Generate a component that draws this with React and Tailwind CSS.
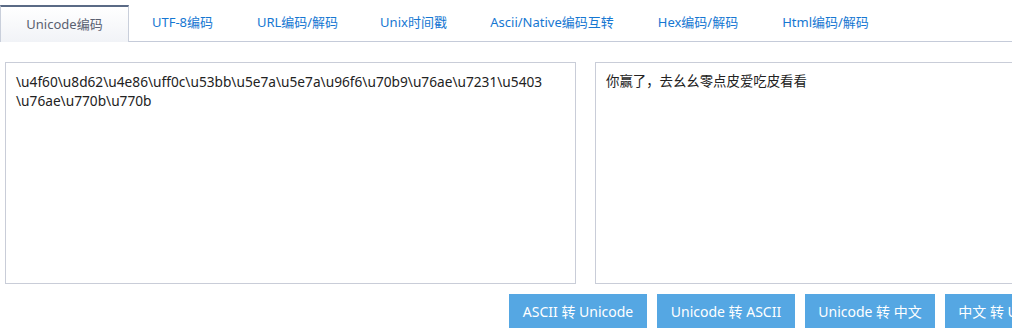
const tabs = [
  { label: "Unicode编码", w: "w-[129px]", active: true },
  { label: "UTF-8编码", w: "w-[107px]" },
  { label: "URL编码/解码", w: "w-[123px]" },
  { label: "Unix时间戳", w: "w-[109px]" },
  { label: "Ascii/Native编码互转", w: "w-[168px]" },
  { label: "Hex编码/解码", w: "w-[124px]" },
  { label: "Html编码/解码", w: "w-[131px]" },
];

const buttons = [
  { label: "ASCII 转 Unicode", w: "w-[138px]" },
  { label: "Unicode 转 ASCII", w: "w-[138px]" },
  { label: "Unicode 转 中文", w: "w-[130px]" },
  { label: "中文 转 Unicode", w: "w-[130px]" },
];

export default function App() {
  return (
    <div
      className="w-[1012px] h-[328px] overflow-hidden bg-white text-[#333]"
      style={{ fontFamily: '"Noto Sans", "Noto Sans CJK SC", sans-serif' }}
    >
      {/* Tab bar */}
      <div className="w-[1200px] h-[42px] flex items-end border-b border-[#c5cbd9]">
        {tabs.map((t) =>
          t.active ? (
            <div
              key={t.label}
              className={`${t.w} h-[37px] -mb-px shrink-0 flex items-center justify-center border-t-2 border-t-[#5a6a85] border-x border-x-[#c9cfdb] bg-gradient-to-b from-white to-[#f1f3f7] text-[13px] text-[#5a6171]`}
            >
              {t.label}
            </div>
          ) : (
            <div
              key={t.label}
              className={`${t.w} h-[36px] shrink-0 flex items-center justify-center text-[13px] text-[#1677d2]`}
            >
              {t.label}
            </div>
          )
        )}
      </div>

      {/* Text areas */}
      <div className="w-[1200px] flex gap-[19px] pl-[5px] mt-[20px]">
        <div className="w-[571px] h-[222px] shrink-0 border border-[#c9cdd8] px-[10px] pt-[9px] text-[13.7px] leading-[19px] text-[#222]">
          <div>\u4f60\u8d62\u4e86\uff0c\u53bb\u5e7a\u5e7a\u96f6\u70b9\u76ae\u7231\u5403</div>
          <div>\u76ae\u770b\u770b</div>
        </div>
        <div className="w-[571px] h-[222px] shrink-0 border border-[#c9cdd8] px-[10px] pt-[9px] text-[13.4px] leading-[19px] text-[#222]">
          你赢了，去幺幺零点皮爱吃皮看看
        </div>
      </div>

      {/* Buttons */}
      <div className="w-[1200px] flex gap-[10px] pl-[509px] mt-[10px]">
        {buttons.map((b) => (
          <button
            key={b.label}
            className={`${b.w} h-[34px] shrink-0 bg-[#55a7e3] text-white text-[14px] flex items-center justify-center`}
          >
            {b.label}
          </button>
        ))}
      </div>
    </div>
  );
}
